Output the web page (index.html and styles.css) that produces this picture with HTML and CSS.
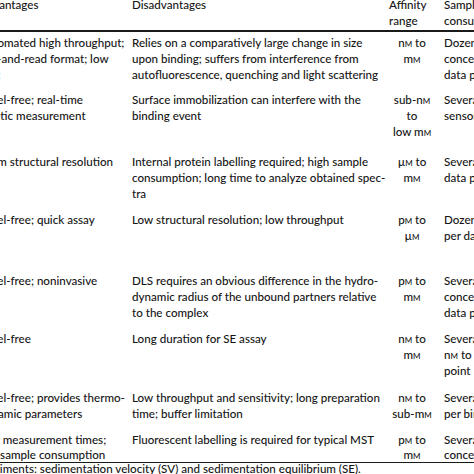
FILE: index.html
```html
<!DOCTYPE html>
<html>
<head>
<meta charset="utf-8">
<link rel="stylesheet" href="styles.css">
</head>
<body>
<div class="page">
  <div class="table">
    <div class="row head">
      <div class="cell c1">Advantages</div>
      <div class="cell c2">Disadvantages</div>
      <div class="cell c3">Affinity<br>range</div>
      <div class="cell c4">Sample<br>consumption</div>
    </div>
    <div class="row r1">
      <div class="cell c1">Automated high throughput;<br>mix-and-read format; low<br>cost</div>
      <div class="cell c2">Relies on a comparatively large change in size<br>upon binding; suffers from interference from<br>autofluorescence, quenching and light scattering</div>
      <div class="cell c3">n<span class="sc">m</span> to<br>m<span class="sc">m</span></div>
      <div class="cell c4">Dozens of<br>concentrations<br>data points</div>
    </div>
    <div class="row r2">
      <div class="cell c1">Label-free; real-time<br>kinetic measurement</div>
      <div class="cell c2">Surface immobilization can interfere with the<br>binding event</div>
      <div class="cell c3">sub-n<span class="sc">m</span><br>to<br>low m<span class="sc">m</span></div>
      <div class="cell c4">Several<br>sensors</div>
    </div>
    <div class="row r3">
      <div class="cell c1">Atom structural resolution</div>
      <div class="cell c2">Internal protein labelling required; high sample<br>consumption; long time to analyze obtained spec-<br>tra</div>
      <div class="cell c3">µ<span class="sc">m</span> to<br>m<span class="sc">m</span></div>
      <div class="cell c4">Several<br>data points</div>
    </div>
    <div class="row r4">
      <div class="cell c1">Label-free; quick assay</div>
      <div class="cell c2">Low structural resolution; low throughput</div>
      <div class="cell c3">p<span class="sc">m</span> to<br>µ<span class="sc">m</span></div>
      <div class="cell c4">Dozens<br>per data</div>
    </div>
    <div class="row r5">
      <div class="cell c1">Label-free; noninvasive</div>
      <div class="cell c2">DLS requires an obvious difference in the hydro-<br>dynamic radius of the unbound partners relative<br>to the complex</div>
      <div class="cell c3">p<span class="sc">m</span> to<br>m<span class="sc">m</span></div>
      <div class="cell c4">Several<br>concentrations<br>data points</div>
    </div>
    <div class="row r6">
      <div class="cell c1">Label-free</div>
      <div class="cell c2">Long duration for SE assay</div>
      <div class="cell c3">n<span class="sc">m</span> to<br>m<span class="sc">m</span></div>
      <div class="cell c4">Several<br>n<span class="sc">m</span> to<br>point</div>
    </div>
    <div class="row r7">
      <div class="cell c1">Label-free; provides thermo-<br>dynamic parameters</div>
      <div class="cell c2">Low throughput and sensitivity; long preparation<br>time; buffer limitation</div>
      <div class="cell c3">n<span class="sc">m</span> to<br>sub-m<span class="sc">m</span></div>
      <div class="cell c4">Several<br>per binding</div>
    </div>
    <div class="row r8">
      <div class="cell c1">Fast measurement times;<br>low sample consumption</div>
      <div class="cell c2">Fluorescent labelling is required for typical MST</div>
      <div class="cell c3">p<span class="sc">m</span> to<br>m<span class="sc">m</span></div>
      <div class="cell c4">Several<br>concentrations</div>
    </div>
  </div>
  <div class="foot">experiments: sedimentation velocity (SV) and sedimentation equilibrium (SE).</div>
</div>
</body>
</html>
```

FILE: styles.css
```css
html, body {
  margin: 0;
  padding: 0;
  background: #fff;
}
body {
  width: 474px;
  height: 474px;
  overflow: hidden;
  font-family: "Lato", "Liberation Sans", sans-serif;
  font-size: 11.6px;
  font-weight: 500;
  line-height: 16px;
  color: #151515;
}
.page {
  margin-left: -21px;
  margin-top: -3px;
}
.row {
  display: grid;
  grid-template-columns: 153px 256px 54px 140px;
  padding: 3px 0 7px;
}
.cell {
  white-space: nowrap;
}
.c3 {
  text-align: center;
  padding-right: 6px;
}
.c4 {
  padding-left: 2px;
}
.head {
  padding: 0 0 0.5px;
  border-bottom: 2px solid #1a1a1a;
}
.head .c3 {
  text-align: left;
  padding: 0 0 0 1px;
}
.r1 { padding-top: 3.5px; padding-bottom: 6px; }
.r2 { padding-bottom: 11px; }
.r3 { padding-bottom: 7px; }
.r4 { padding-bottom: 26px; }
.r5 { padding-bottom: 7px; }
.r6 { padding-bottom: 8px; }
.r7 { padding-bottom: 7px; }
.r8 {
  line-height: 15px;
  padding-bottom: 0;
  border-bottom: 1.5px solid #1a1a1a;
}
.sc {
  font-variant: small-caps;
}
.foot {
  margin-left: -8px;
  line-height: 12px;
  white-space: nowrap;
}
```
